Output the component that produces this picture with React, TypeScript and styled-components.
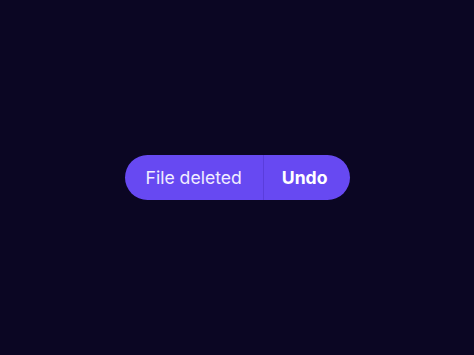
import React from "react";
import styled, { createGlobalStyle } from "styled-components";

const Global = createGlobalStyle`
  html, body { margin: 0; padding: 0; background: #0b0623; }
  #root { height: 100vh; }
`;

const Stage = styled.div`
  height: 355px;
  display: flex;
  align-items: center;
  justify-content: center;
  font-family: Inter, "Noto Sans", sans-serif;
`;

const Toast = styled.div`
  display: flex;
  align-items: stretch;
  height: 45px;
  border-radius: 23px;
  background: #6749f2;
  color: #ffffff;
  overflow: hidden;
`;

const Message = styled.span`
  display: flex;
  align-items: center;
  padding: 0 21px 0 21px;
  font-size: 17.6px;
  font-weight: 400;
  color: #f1eeff;
`;

const Divider = styled.span`
  width: 1px;
  background: #5a3ddc;
`;

const UndoButton = styled.button`
  display: flex;
  align-items: center;
  border: none;
  background: transparent;
  color: #ffffff;
  padding: 0 22px 0 18px;
  font-family: inherit;
  font-size: 17.6px;
  font-weight: 700;
  cursor: pointer;
`;

export default function App() {
  return (
    <>
      <Global />
      <Stage>
        <Toast>
          <Message>File deleted</Message>
          <Divider />
          <UndoButton>Undo</UndoButton>
        </Toast>
      </Stage>
    </>
  );
}
